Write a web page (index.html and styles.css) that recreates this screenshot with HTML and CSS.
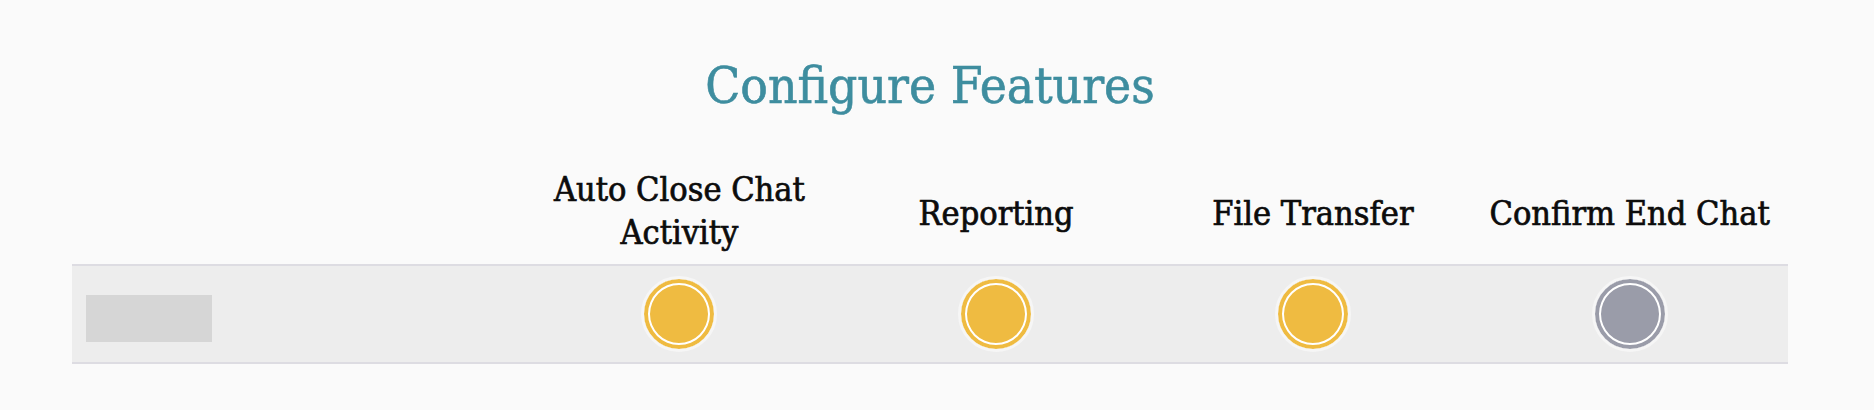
FILE: index.html
```html
<!DOCTYPE html>
<html lang="en">
<head>
<meta charset="utf-8">
<title>Configure Features</title>
<link rel="stylesheet" href="styles.css">
</head>
<body>
<div class="panel">
  <h1 class="title">Configure Features</h1>
  <div class="table">
    <div class="head">
      <div class="cell label"></div>
      <div class="cell">Auto Close Chat Activity</div>
      <div class="cell single">Reporting</div>
      <div class="cell single">File Transfer</div>
      <div class="cell single">Confirm End Chat</div>
    </div>
    <div class="row">
      <div class="cell label"><span class="placeholder"></span></div>
      <div class="cell"><span class="toggle on"></span></div>
      <div class="cell"><span class="toggle on"></span></div>
      <div class="cell"><span class="toggle on"></span></div>
      <div class="cell"><span class="toggle off"></span></div>
    </div>
  </div>
</div>
</body>
</html>
```
FILE: styles.css
```css
html, body {
  margin: 0;
  padding: 0;
  background: #fafafa;
}
body {
  font-family: "DejaVu Serif Condensed", "DejaVu Serif", serif;
  font-stretch: condensed;
}
.panel {
  width: 1716px;
  margin-left: 72px;
  padding-top: 56px;
}
.title {
  margin: 0;
  font-size: 51px;
  line-height: 60px;
  font-weight: normal;
  color: #3e8d9f;
  text-align: center;
  -webkit-text-stroke: 0.6px #3e8d9f;
}
.table {
  margin-top: 52px;
}
.head, .row {
  display: grid;
  grid-template-columns: 449px repeat(4, 1fr);
}
.head .cell {
  font-size: 34px;
  line-height: 43px;
  color: #0c0c0c;
  -webkit-text-stroke: 0.7px #0c0c0c;
  text-align: center;
  padding: 0 8px 10px;
  display: flex;
  align-items: center;
  justify-content: center;
}
.head .single {
  padding-top: 4px;
  white-space: nowrap;
}
.row {
  background: #ededed;
  border-top: 2px solid #dddce2;
  border-bottom: 2px solid #dddce2;
  height: 96px;
}
.row .cell {
  display: flex;
  align-items: center;
  justify-content: center;
}
.row .label {
  justify-content: flex-start;
  align-items: flex-start;
  padding-left: 14px;
}
.placeholder {
  display: block;
  width: 126px;
  height: 47px;
  margin-top: 29px;
  background: #d6d6d6;
}
.toggle {
  display: block;
  width: 70px;
  height: 70px;
  border-radius: 50%;
  border: 3px solid #f6f6f6;
}
.toggle.on {
  background: #efbb41;
  box-shadow: inset 0 0 0 4px #efbb41, inset 0 0 0 6px #ffffff;
}
.toggle.off {
  background: #9a9ca9;
  box-shadow: inset 0 0 0 4px #9a9ca9, inset 0 0 0 6px #ffffff;
}
```
